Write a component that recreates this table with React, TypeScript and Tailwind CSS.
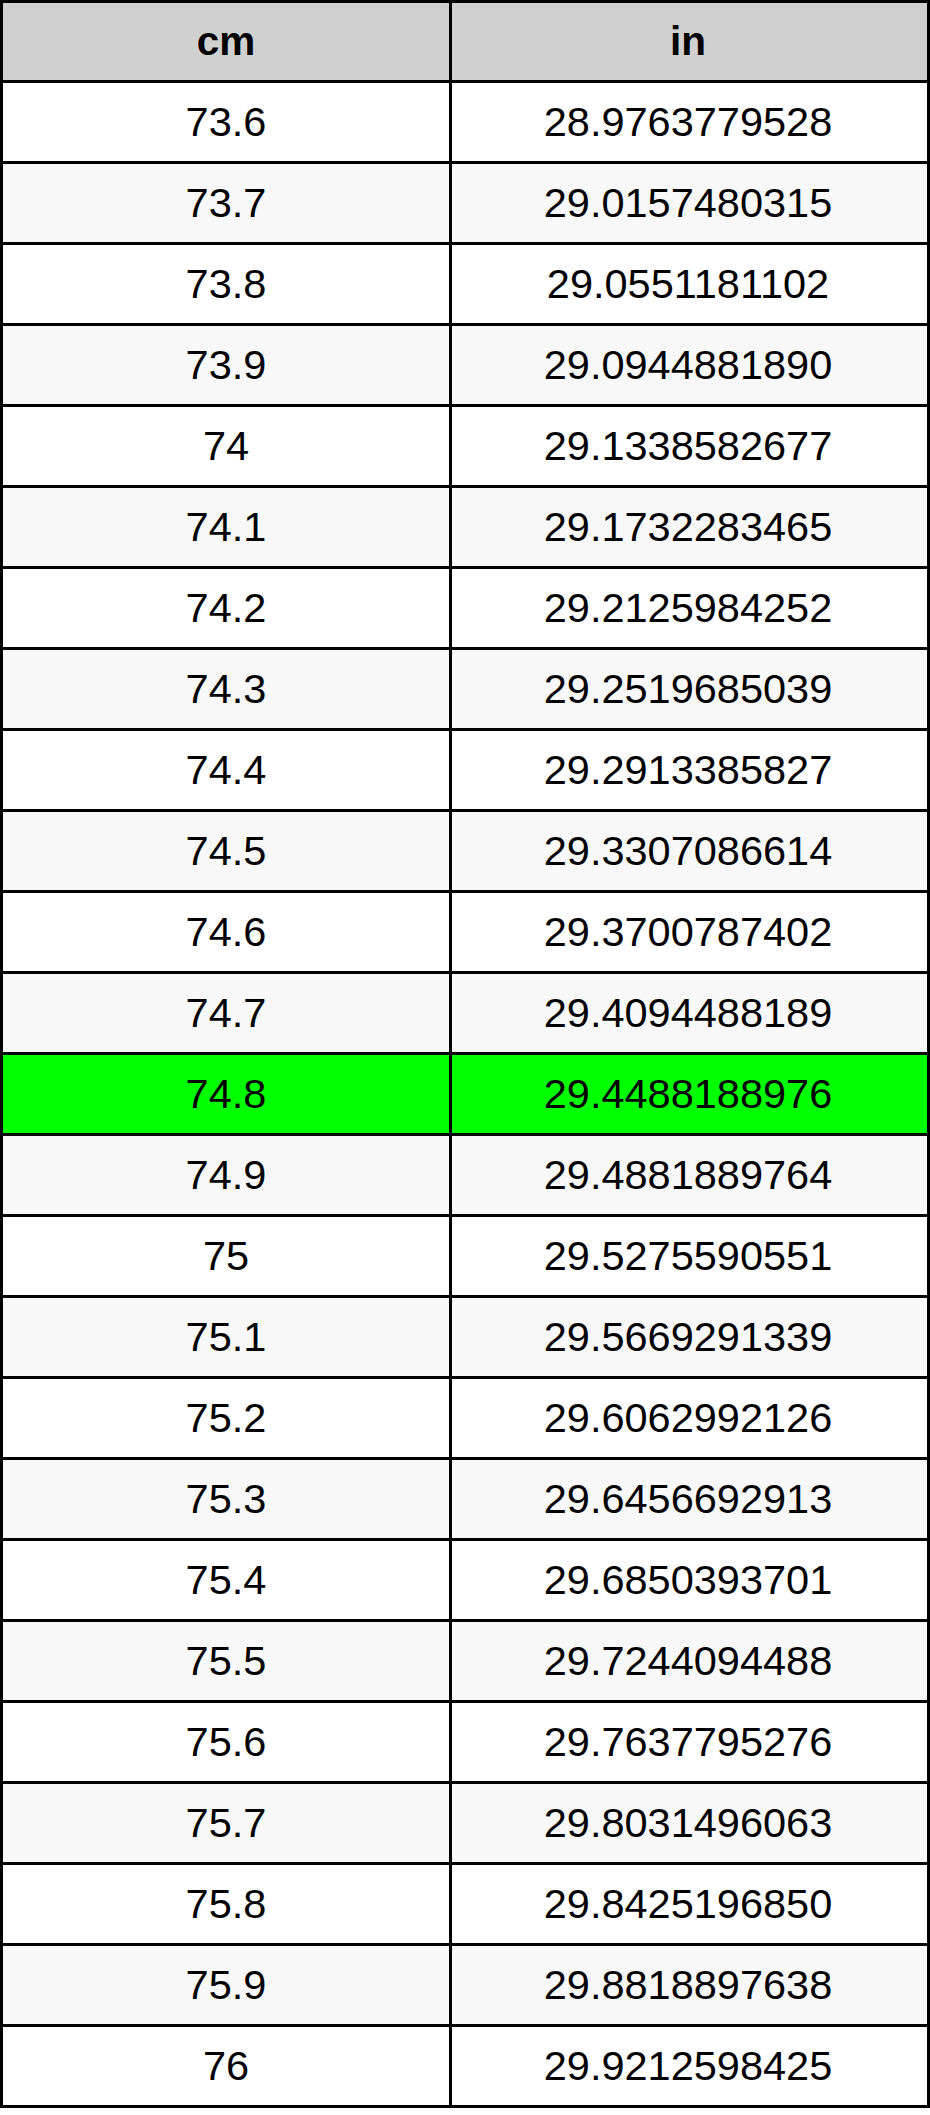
const rows: [string, string][] = [
  ['73.6', '28.9763779528'],
  ['73.7', '29.0157480315'],
  ['73.8', '29.0551181102'],
  ['73.9', '29.0944881890'],
  ['74', '29.1338582677'],
  ['74.1', '29.1732283465'],
  ['74.2', '29.2125984252'],
  ['74.3', '29.2519685039'],
  ['74.4', '29.2913385827'],
  ['74.5', '29.3307086614'],
  ['74.6', '29.3700787402'],
  ['74.7', '29.4094488189'],
  ['74.8', '29.4488188976'],
  ['74.9', '29.4881889764'],
  ['75', '29.5275590551'],
  ['75.1', '29.5669291339'],
  ['75.2', '29.6062992126'],
  ['75.3', '29.6456692913'],
  ['75.4', '29.6850393701'],
  ['75.5', '29.7244094488'],
  ['75.6', '29.7637795276'],
  ['75.7', '29.8031496063'],
  ['75.8', '29.8425196850'],
  ['75.9', '29.8818897638'],
  ['76', '29.9212598425'],
];

export default function App() {
  return (
    <div className="bg-white min-h-[2115px] font-['Liberation_Sans',Arial,sans-serif] text-black text-[41.5px] leading-[1.15]">
      <div className="w-[930px] border-[3px] border-black">
        <div className="grid grid-cols-[449px_472px] h-[77px] bg-[#d0d0d0] font-bold text-[40.5px]">
          <div className="flex items-center justify-center border-r-[3px] border-black">cm</div>
          <div className="flex items-center justify-center">in</div>
        </div>
        {rows.map(([cm, inch], i) => {
          const bg = cm === '74.8' ? 'bg-[#00ff00]' : i % 2 === 1 ? 'bg-[#f8f8f8]' : 'bg-white';
          return (
            <div key={cm} className={`grid grid-cols-[449px_472px] h-[81px] border-t-[3px] border-black ${bg}`}>
              <div className="flex items-center justify-center border-r-[3px] border-black">{cm}</div>
              <div className="flex items-center justify-center">{inch}</div>
            </div>
          );
        })}
      </div>
    </div>
  );
}
